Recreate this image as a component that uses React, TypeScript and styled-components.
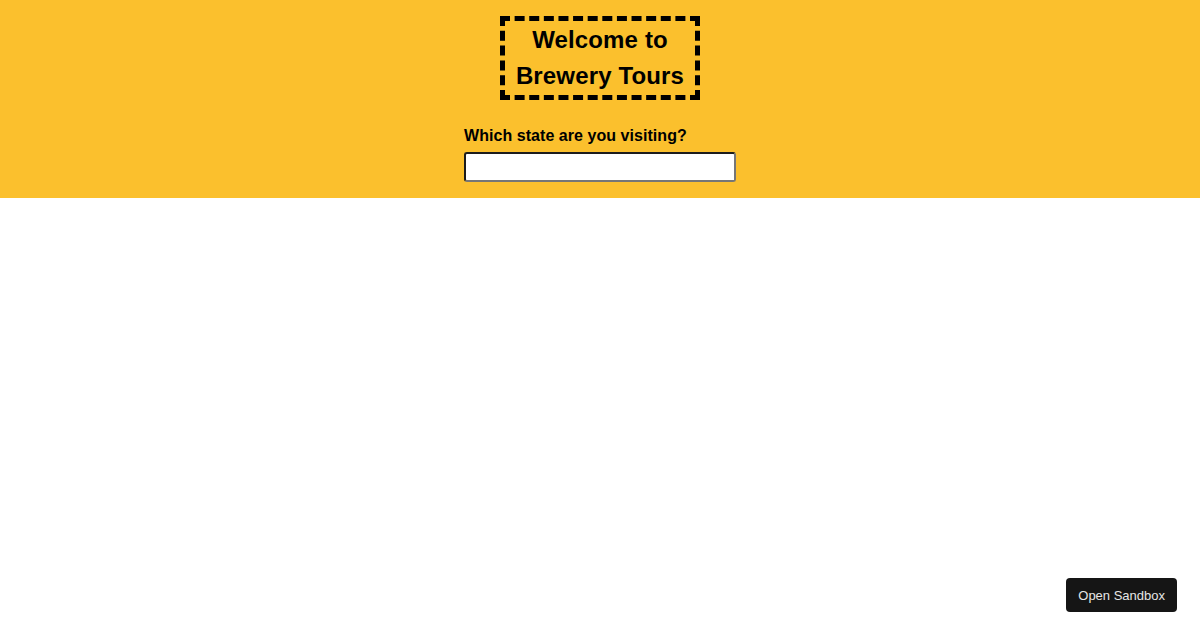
import React, { useState } from "react";
import styled, { createGlobalStyle } from "styled-components";

const GlobalStyle = createGlobalStyle`
  html, body {
    margin: 0;
    padding: 0;
    background: #fff;
    font-family: "Liberation Sans", Arial, sans-serif;
  }
`;

const Header = styled.header`
  display: flex;
  flex-direction: column;
  align-items: center;
  padding: 16px 0 16px;
  background: #fbc02d;
  box-shadow: 0 3px 8px rgba(0, 0, 0, 0.16);
`;

const Title = styled.h1`
  box-sizing: border-box;
  width: 200px;
  margin: 0 0 26px;
  padding: 1px 0;
  border: 5px dashed #000;
  font-size: 24px;
  line-height: 36px;
  font-weight: 700;
  letter-spacing: 0.15px;
  text-align: center;
  color: #000;
`;

const Form = styled.form`
  display: flex;
  flex-direction: column;
  gap: 7px;
  width: 272px;
`;

const Label = styled.label`
  padding-top: 1px;
  font-size: 16px;
  line-height: 18px;
  font-weight: 700;
  letter-spacing: 0.05px;
  color: #000;
`;

const StateInput = styled.input`
  box-sizing: border-box;
  width: 100%;
  height: 30px;
  margin: 0;
  padding: 1px 4px;
  border: 2px solid;
  border-color: #1c1c1c #767676 #767676 #1c1c1c;
  border-radius: 3px;
  background: #fff;
  font-size: 14px;
  font-family: "Liberation Sans", Arial, sans-serif;
  outline: none;
`;

const SandboxButton = styled.button`
  position: fixed;
  right: 23px;
  bottom: 18px;
  height: 34px;
  padding: 0 12px;
  border: none;
  border-radius: 4px;
  background: #151515;
  color: #e6e6e6;
  font-size: 13px;
  font-family: "Liberation Sans", Arial, sans-serif;
  cursor: pointer;
`;

const App: React.FC = () => {
    const [state, setState] = useState("");
    return (
        <>
            <GlobalStyle />
            <Header>
                <Title>Welcome to Brewery Tours</Title>
                <Form onSubmit={e => e.preventDefault()}>
                    <Label htmlFor="state-input">Which state are you visiting?</Label>
                    <StateInput id="state-input" value={state} onChange={e => setState(e.target.value)} />
                </Form>
            </Header>
            <SandboxButton>Open Sandbox</SandboxButton>
        </>
    );
}

export default App;
